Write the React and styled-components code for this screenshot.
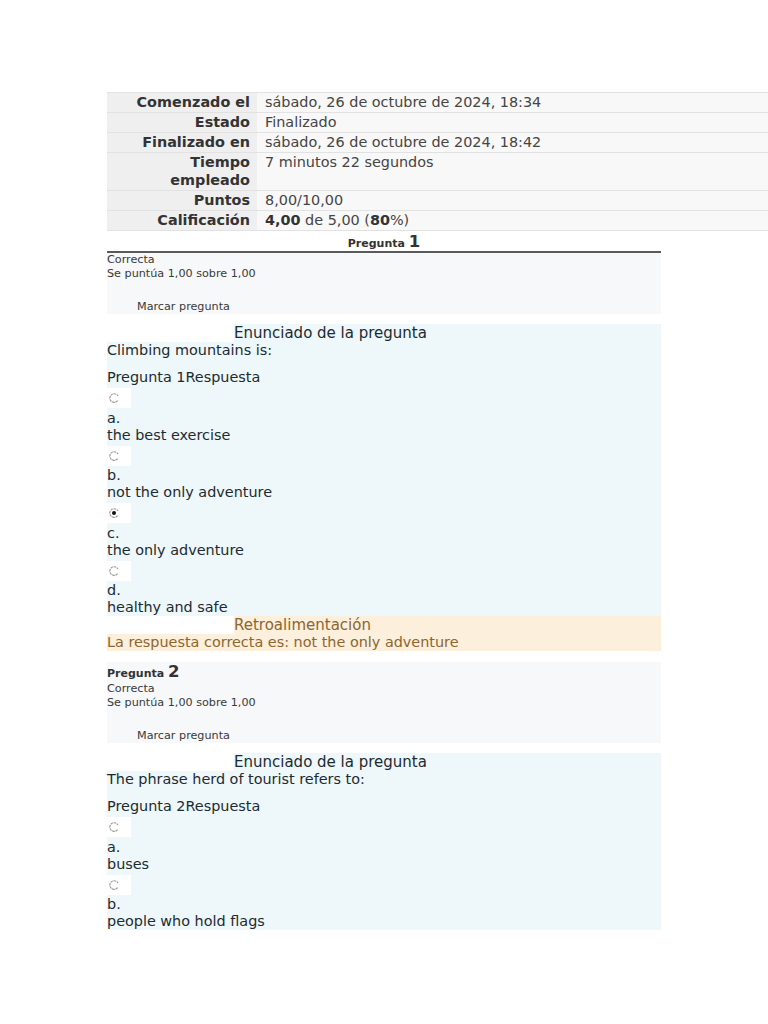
import React from "react";
import styled, { createGlobalStyle } from "styled-components";

const GlobalStyle = createGlobalStyle`
  html, body {
    margin: 0;
    padding: 0;
    background: #ffffff;
    overflow-x: hidden;
  }
  body {
    font-family: "DejaVu Sans", "Liberation Sans", sans-serif;
  }
`;

const summary = [
  { label: "Comenzado el", value: "sábado, 26 de octubre de 2024, 18:34" },
  { label: "Estado", value: "Finalizado" },
  { label: "Finalizado en", value: "sábado, 26 de octubre de 2024, 18:42" },
  { label: ["Tiempo", "empleado"], value: "7 minutos 22 segundos" },
  { label: "Puntos", value: "8,00/10,00" },
  {
    label: "Calificación",
    value: (
      <>
        <b>4,00</b> de 5,00 (<b>80</b>%)
      </>
    ),
  },
];

const questions = [
  {
    number: 1,
    centered: true,
    text: "Climbing mountains is:",
    options: [
      { letter: "a.", text: "the best exercise" },
      { letter: "b.", text: "not the only adventure" },
      { letter: "c.", text: "the only adventure", checked: true },
      { letter: "d.", text: "healthy and safe" },
    ],
    feedback: "La respuesta correcta es: not the only adventure",
  },
  {
    number: 2,
    centered: false,
    text: "The phrase herd of tourist refers to:",
    options: [
      { letter: "a.", text: "buses" },
      { letter: "b.", text: "people who hold flags" },
    ],
  },
];

const Page = styled.div`
  padding: 92px 0 60px 107px;
`;

const Column = styled.div`
  width: 554px;
`;

const SummaryTable = styled.table`
  width: 700px;
  border-collapse: collapse;
  font-size: 14.4px;
  line-height: 18px;
`;

const Row = styled.tr`
  border-top: 1px solid #e2e2e2;
  &:last-child {
    border-bottom: 1px solid #e2e2e2;
  }
`;

const Label = styled.th`
  width: 150px;
  box-sizing: border-box;
  padding: 0 7px 1px 0;
  text-align: right;
  vertical-align: top;
  font-weight: bold;
  color: #333333;
  background: #efefef;
`;

const Value = styled.td`
  padding: 0 0 1px 8px;
  vertical-align: top;
  color: #454545;
  background: #f8f8f8;
  b {
    color: #333333;
  }
`;

const QuestionNo = styled.div`
  font-size: 11px;
  font-weight: bold;
  color: #333333;
  text-align: ${(p) => (p.$centered ? "center" : "left")};
  line-height: ${(p) => (p.$centered ? "18px" : "17px")};
  padding-top: ${(p) => (p.$centered ? "2px" : "1px")};
  border-bottom: ${(p) => (p.$centered ? "2px solid #5a5a5a" : "none")};
  height: ${(p) => (p.$centered ? "18px" : "auto")};
  span {
    font-size: 16.5px;
  }
`;

const InfoBox = styled.div`
  background: #f7f8f9;
  padding-bottom: 1px;
  margin-top: ${(p) => (p.$first ? "0" : "11px")};
  color: #3a3a3a;
`;

const Small = styled.div`
  font-size: 11.2px;
  line-height: 13.5px;
`;

const Flag = styled(Small)`
  padding-left: 30px;
  margin-top: 19.5px;
`;

const Formulation = styled.div`
  margin-top: 10px;
  font-size: 14.4px;
  line-height: 17px;
  color: #1c2b31;
`;

const SectionTitle = styled.div`
  margin-left: 127px;
  font-size: 15px;
  line-height: 18px;
  background: ${(p) => p.$bg};
  color: ${(p) => p.$color || "inherit"};
`;

const Band = styled.div`
  background: ${(p) => p.$bg};
  color: ${(p) => p.$color || "inherit"};
`;

const Gap = styled.div`
  height: 10px;
`;

const RadioRow = styled.div`
  display: flex;
  padding: 2px 0 1.5px;
`;

const RadioCell = styled.div`
  width: 24px;
  height: 20px;
  background: #ffffff;
  display: flex;
  align-items: center;
  padding-left: 1px;
  box-sizing: border-box;
`;

const Radio = ({ checked }) => (
  <svg width="12" height="12" viewBox="0 0 12 12">
    <path
      d="M9.6 8.6 A4.3 4.3 0 1 1 9.9 4"
      fill="none"
      stroke="#999999"
      strokeWidth="1.2"
      strokeDasharray="2.6 0.7"
    />
    {checked && <circle cx="6" cy="6" r="2" fill="#111" />}
  </svg>
);

const formBg = "#eef7fa";
const outBg = "#fcefdc";
const outColor = "#8d6630";

const Question = ({ q }) => (
  <>
    {q.centered && (
      <QuestionNo $centered>
        Pregunta <span>{q.number}</span>
      </QuestionNo>
    )}
    <InfoBox $first={q.centered}>
      {!q.centered && (
        <QuestionNo>
          Pregunta <span>{q.number}</span>
        </QuestionNo>
      )}
      <Small>Correcta</Small>
      <Small>Se puntúa 1,00 sobre 1,00</Small>
      <Flag>Marcar pregunta</Flag>
    </InfoBox>
    <Formulation>
      <SectionTitle $bg={formBg}>Enunciado de la pregunta</SectionTitle>
      <Band $bg={formBg}>
        <div>{q.text}</div>
        <Gap />
        <div>Pregunta {q.number}Respuesta</div>
        {q.options.map((o) => (
          <div key={o.letter}>
            <RadioRow>
              <RadioCell>
                <Radio checked={o.checked} />
              </RadioCell>
            </RadioRow>
            <div>{o.letter}</div>
            <div>{o.text}</div>
          </div>
        ))}
      </Band>
      {q.feedback && (
        <>
          <SectionTitle $bg={outBg} $color={outColor}>
            Retroalimentación
          </SectionTitle>
          <Band $bg={outBg} $color={outColor}>
            {q.feedback}
          </Band>
        </>
      )}
    </Formulation>
  </>
);

export default function App() {
  return (
    <>
      <GlobalStyle />
      <Page>
        <SummaryTable>
          <tbody>
            {summary.map((r, i) => (
              <Row key={i}>
                <Label>
                  {Array.isArray(r.label)
                    ? r.label.map((l) => <div key={l}>{l}</div>)
                    : r.label}
                </Label>
                <Value>{r.value}</Value>
              </Row>
            ))}
          </tbody>
        </SummaryTable>
        <Column>
          {questions.map((q) => (
            <Question key={q.number} q={q} />
          ))}
        </Column>
      </Page>
    </>
  );
}
